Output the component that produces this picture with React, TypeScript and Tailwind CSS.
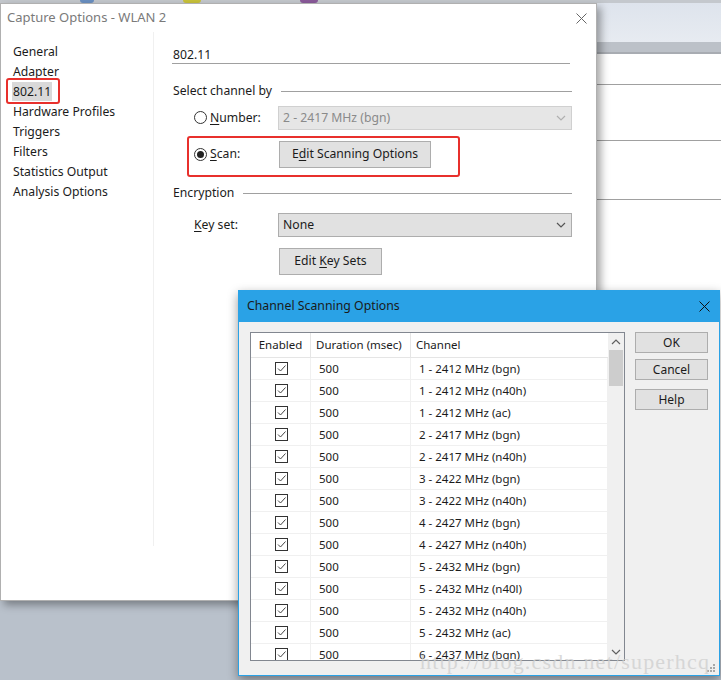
import React from 'react';

const navItems = ['General', 'Adapter', '802.11', 'Hardware Profiles', 'Triggers', 'Filters', 'Statistics Output', 'Analysis Options'];

const channels = [
    '1 - 2412 MHz (bgn)',
    '1 - 2412 MHz (n40h)',
    '1 - 2412 MHz (ac)',
    '2 - 2417 MHz (bgn)',
    '2 - 2417 MHz (n40h)',
    '3 - 2422 MHz (bgn)',
    '3 - 2422 MHz (n40h)',
    '4 - 2427 MHz (bgn)',
    '4 - 2427 MHz (n40h)',
    '5 - 2432 MHz (bgn)',
    '5 - 2432 MHz (n40l)',
    '5 - 2432 MHz (n40h)',
    '5 - 2432 MHz (ac)',
    '6 - 2437 MHz (bgn)',
];

const Chevron: React.FC<{ up?: boolean; className?: string }> = ({ up, className }) => (
    <svg width="10" height="6" viewBox="0 0 10 6" className={className}>
        <path d={up ? 'M1 5 L5 1 L9 5' : 'M1 1 L5 5 L9 1'} fill="none" stroke="currentColor" strokeWidth="1.2" />
    </svg>
);

const CloseX: React.FC<{ className?: string }> = ({ className }) => (
    <svg width="11" height="11" viewBox="0 0 11 11" className={className}>
        <path d="M0.5 0.5 L10.5 10.5 M10.5 0.5 L0.5 10.5" stroke="currentColor" strokeWidth="1" />
    </svg>
);

const Check: React.FC = () => (
    <span className="w-[13px] h-[13px] border border-[#333] bg-white flex items-center justify-center">
        <svg width="11" height="11" viewBox="0 0 11 11">
            <path d="M2 5.5 L4.5 8 L9.5 2.5" fill="none" stroke="#444" strokeWidth="1" />
        </svg>
    </span>
);

const GroupTitle: React.FC<{ label: string; className?: string }> = ({ label, className }) => (
    <div className={`flex items-center h-[20px] ${className || ''}`}>
        <span>{label}</span>
        <div className="flex-1 ml-[9px] border-t border-[#a0a0a0]"></div>
    </div>
);

const Radio: React.FC<{ checked?: boolean }> = ({ checked }) => (
    <span className="w-[13px] h-[13px] rounded-full border border-[#333] bg-white flex items-center justify-center">
        {checked && <span className="w-[7px] h-[7px] rounded-full bg-[#222]"></span>}
    </span>
);

const MainWindow: React.FC = () => (
    <div className="absolute left-0 top-[3px] w-[597px] h-[598px] bg-white border border-[#b0b0b0] shadow-[4px_4px_8px_rgba(0,0,0,0.35)] text-[12.2px] text-[#1b1b1b]">
        <div className="h-[28px] flex items-center justify-between pl-[6px] pr-[9px] text-[13px] text-[#7a7a7a]">
            <span>Capture Options - WLAN 2</span>
            <CloseX className="text-[#666]" />
        </div>
        <div className="flex">
            <div className="w-[153px] h-[514px] pt-[10px] border-r border-[#f0f0f0]">
                {navItems.map(item => (
                    <div key={item} className="h-[20px] leading-[20px] pl-[11px]">
                        {item === '802.11' ? (
                            <span className="relative inline-block bg-[#d9d9d9] px-[1px] leading-[19px]">
                                {item}
                                <span className="absolute -left-[6px] -top-[4px] -right-[8px] -bottom-[3px] border-2 border-[#e8302c] rounded-[3px]"></span>
                            </span>
                        ) : (
                            <span className="px-[1px]">{item}</span>
                        )}
                    </div>
                ))}
            </div>
            <div className="pl-[18px] pt-[13px] w-[418px]">
                <div className="h-[19px] leading-[19px] border-b border-[#a0a0a0] pl-[1px] mr-[2px]">802.11</div>
                <GroupTitle label="Select channel by" className="mt-[17px] pl-[1px]" />
                <div className="mt-[5px] flex items-center pl-[22px]">
                    <div className="w-[84px] flex items-center gap-[3px]">
                        <Radio />
                        <span><span className="underline underline-offset-2">N</span>umber:</span>
                    </div>
                    <div className="w-[294px] h-[24px] bg-[#e6e6e6] border border-[#d0d0d0] flex items-center justify-between pl-[4px] pr-[5px] text-[#8a8a8a]">
                        <span>2 - 2417 MHz (bgn)</span>
                        <Chevron className="text-[#b0b0b0]" />
                    </div>
                </div>
                <div className="relative mt-[11px] flex items-center pl-[22px]">
                    <span className="absolute left-[15px] -top-[5px] w-[273px] h-[41px] border-2 border-[#e8302c] rounded-[3px]"></span>
                    <div className="w-[85px] flex items-center gap-[3px]">
                        <Radio checked />
                        <span><span className="underline underline-offset-2">S</span>can:</span>
                    </div>
                    <button className="w-[152px] h-[27px] bg-[#e1e1e1] border border-[#adadad] text-[#1b1b1b]">
                        E<span className="underline underline-offset-2">d</span>it Scanning Options
                    </button>
                </div>
                <GroupTitle label="Encryption" className="mt-[15px] pl-[1px]" />
                <div className="mt-[10px] flex items-center pl-[22px]">
                    <div className="w-[84px]">
                        <span className="underline underline-offset-2">K</span>ey set:
                    </div>
                    <div className="w-[294px] h-[24px] bg-[#e1e1e1] border border-[#adadad] flex items-center justify-between pl-[4px] pr-[5px]">
                        <span>None</span>
                        <Chevron className="text-[#555]" />
                    </div>
                </div>
                <button className="mt-[11px] ml-[107px] w-[103px] h-[27px] bg-[#e1e1e1] border border-[#adadad] text-[#1b1b1b]">
                    Edit <span className="underline underline-offset-2">K</span>ey Sets
                </button>
            </div>
        </div>
    </div>
);

const ScanDialog: React.FC = () => (
    <div className="absolute left-[238px] top-[290px] w-[482px] h-[386px] bg-[#f0f0f0] border border-[#2aa2e6] shadow-[0_4px_10px_rgba(0,0,0,0.4)] text-[#1b1b1b]">
        <div className="h-[31px] bg-[#2aa2e6] flex items-center justify-between pl-[8px] pr-[9px] text-[12.3px] text-[#1a1a1a]">
            <span>Channel Scanning Options</span>
            <CloseX className="text-[#111]" />
        </div>
        <div className="flex pt-[10px] pl-[11px]">
            <div className="w-[375px] h-[329px] border border-[#828790] bg-white flex overflow-hidden text-[11.5px]">
                <div className="w-[357px]">
                    <div className="flex h-[25px] border-b border-[#e5e5e5] items-center">
                        <div className="w-[60px] h-full flex items-center justify-center border-r border-[#e5e5e5]">Enabled</div>
                        <div className="w-[100px] h-full flex items-center pl-[5px] border-r border-[#e5e5e5]">Duration (msec)</div>
                        <div className="flex-1 h-full flex items-center pl-[5px]">Channel</div>
                    </div>
                    {channels.map((c, i) => (
                        <div key={i} className="flex h-[22px] border-b border-[#f0f0f0]">
                            <div className="w-[60px] flex items-center justify-center border-r border-[#f0f0f0] pl-[2px]">
                                <Check />
                            </div>
                            <div className="w-[100px] flex items-center pl-[8px] border-r border-[#f0f0f0]">500</div>
                            <div className="flex-1 flex items-center pl-[8px] border-r border-[#f0f0f0]">{c}</div>
                        </div>
                    ))}
                </div>
                <div className="w-[16px] bg-[#f0f0f0] flex flex-col">
                    <div className="h-[17px] flex items-center justify-center text-[#606060]">
                        <Chevron up />
                    </div>
                    <div className="mx-[1px] h-[36px] bg-[#cdcdcd]"></div>
                    <div className="flex-1"></div>
                    <div className="h-[17px] flex items-center justify-center text-[#606060]">
                        <Chevron />
                    </div>
                </div>
            </div>
            <div className="ml-[10px] flex flex-col text-[12px]">
                <button className="w-[73px] h-[21px] bg-[#e1e1e1] border border-[#adadad]">OK</button>
                <button className="mt-[6px] w-[73px] h-[21px] bg-[#e1e1e1] border border-[#adadad]">Cancel</button>
                <button className="mt-[9px] w-[73px] h-[21px] bg-[#e1e1e1] border border-[#adadad]">Help</button>
            </div>
        </div>
        <div className="absolute right-[4px] bottom-[3px] grid grid-cols-3 gap-[1px]">
            {[0, 1, 2, 3, 4, 5, 6, 7, 8].map(n => (
                <span key={n} className={`w-[2px] h-[2px] ${n === 0 || n === 1 || n === 3 ? 'bg-transparent' : 'bg-[#a8a8a8]'}`}></span>
            ))}
        </div>
    </div>
);

const App: React.FC = () => {
    return (
        <div className="relative w-[721px] h-[680px] overflow-hidden bg-[#b9c1cb]" style={{ fontFamily: '"Noto Sans", "Segoe UI", sans-serif' }}>
            {/* background app */}
            <div className="absolute left-0 top-0 w-[721px] h-[600px] bg-white">
                <div className="h-[42px] bg-gradient-to-b from-[#dde3ec] to-[#e7ebf1]"></div>
                <div className="h-[12px] bg-[#bcc1c8] border-b-2 border-[#a8acb2]"></div>
                <div className="h-[31px] border-b border-[#a0a0a0]"></div>
                <div className="h-[56px] border-b border-[#a0a0a0]"></div>
                <div className="h-[59px] border-b border-[#a0a0a0]"></div>
            </div>
            <div className="absolute left-0 top-0 w-[721px] h-[3px] bg-[#c4c8cd]"></div>
            <span className="absolute left-[80px] top-0 w-[14px] h-[3px] rounded-b-full bg-[#6a8fc0]"></span>
            <span className="absolute left-[183px] top-0 w-[18px] h-[3px] rounded-b-full bg-[#c8c23a]"></span>
            <span className="absolute left-[300px] top-0 w-[18px] h-[3px] rounded-b-full bg-[#8a5a9a]"></span>

            <MainWindow />
            <ScanDialog />

            <div className="absolute left-[420px] top-[645px] text-[22px] text-[#cfcfcf]/80 pointer-events-none tracking-[1.2px]" style={{ fontFamily: '"Liberation Serif", serif' }}>
                http://blog.csdn.net/superhcq
            </div>
        </div>
    );
};

export default App;
